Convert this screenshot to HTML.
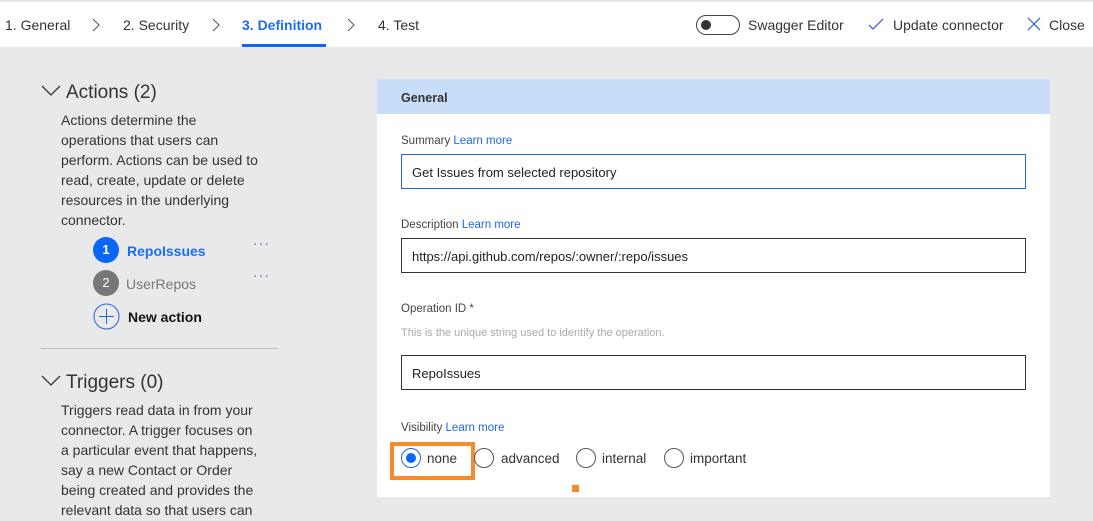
<!DOCTYPE html>
<html><head><meta charset="utf-8"><style>
*{margin:0;padding:0;box-sizing:border-box}
body{width:1093px;height:521px;overflow:hidden;background:#e9e9e9;font-family:"Liberation Sans",sans-serif;color:#222;position:relative}
.a{position:absolute;white-space:nowrap}
#hdr{position:absolute;left:0;top:0;width:1093px;height:47px;background:#fff;border-top:2px solid #e6e6e6}
.t{font-size:14px;color:#333;top:15px}
.d{font-size:14px;line-height:20px;color:#333}
.lbl{font-size:11.5px;color:#444}
.lbl span{color:#2266e0}
.inp{position:absolute;left:401px;width:625px;height:35px;border:1px solid #333;background:#fff;font-size:13px;padding:10px 10px;color:#222}
.rad{position:absolute;width:20px;height:20px;border:1px solid #555;border-radius:50%;background:#fff}
</style></head><body>
<div id="hdr">
<div class="a t" style="left:5px">1. General</div>
<svg class="a" style="left:92px;top:16px" width="8" height="14"><path d="M1 1l6 6-6 6" fill="none" stroke="#666" stroke-width="1.2"/></svg>
<div class="a t" style="left:123px">2. Security</div>
<svg class="a" style="left:212px;top:16px" width="8" height="14"><path d="M1 1l6 6-6 6" fill="none" stroke="#666" stroke-width="1.2"/></svg>
<div class="a t" style="left:242px;color:#1a6ef5;font-weight:bold">3. Definition</div>
<div class="a" style="left:242px;top:42px;width:84px;height:3px;background:#0a66f5"></div>
<svg class="a" style="left:347px;top:16px" width="8" height="14"><path d="M1 1l6 6-6 6" fill="none" stroke="#666" stroke-width="1.2"/></svg>
<div class="a t" style="left:378px">4. Test</div>
<div class="a" style="left:696px;top:13px;width:44px;height:20px;border:1px solid #444;border-radius:10px"></div>
<div class="a" style="left:701px;top:18px;width:10px;height:10px;border-radius:50%;background:#333"></div>
<div class="a t" style="left:748px">Swagger Editor</div>
<svg class="a" style="left:868px;top:16px" width="16" height="13"><path d="M1 7l4 4 10-10" fill="none" stroke="#4a6fd0" stroke-width="1.3"/></svg>
<div class="a t" style="left:893px">Update connector</div>
<svg class="a" style="left:1027px;top:15px" width="14" height="14"><path d="M1 1l12 12M13 1L1 13" fill="none" stroke="#4a6fd0" stroke-width="1.3"/></svg>
<div class="a t" style="left:1049px">Close</div>
</div>

<svg class="a" style="left:41px;top:85px" width="20" height="12"><path d="M1 1l9 9 9-9" fill="none" stroke="#333" stroke-width="1.3"/></svg>
<div class="a" style="left:66px;top:82px;font-size:19px;color:#333">Actions (2)</div>
<div class="a d" style="left:61px;top:110px">Actions determine the</div>
<div class="a d" style="left:61px;top:130px">operations that users can</div>
<div class="a d" style="left:61px;top:150px">perform. Actions can be used to</div>
<div class="a d" style="left:61px;top:170px">read, create, update or delete</div>
<div class="a d" style="left:61px;top:190px">resources in the underlying</div>
<div class="a d" style="left:61px;top:210px">connector.</div>

<div class="a" style="left:93px;top:237px;width:26px;height:26px;border-radius:50%;background:#0a66f5;color:#fff;font-size:13px;font-weight:bold;text-align:center;line-height:26px">1</div>
<div class="a" style="left:127px;top:243px;font-size:14px;font-weight:bold;color:#1a6ef5">RepoIssues</div>
<div class="a" style="left:253px;top:235px;font-size:14px;color:#4a6fd0;letter-spacing:1px">···</div>
<div class="a" style="left:93px;top:270px;width:26px;height:26px;border-radius:50%;background:#777;color:#fff;font-size:13px;text-align:center;line-height:26px">2</div>
<div class="a" style="left:126px;top:276px;font-size:14px;color:#777">UserRepos</div>
<div class="a" style="left:253px;top:267px;font-size:14px;color:#4a6fd0;letter-spacing:1px">···</div>
<svg class="a" style="left:93px;top:303px" width="27" height="27"><circle cx="13.5" cy="13.5" r="12.5" fill="none" stroke="#2266e0" stroke-width="1"/><path d="M13.5 6v15M6 13.5h15" stroke="#2266e0" stroke-width="1"/></svg>
<div class="a" style="left:128px;top:309px;font-size:14px;font-weight:bold;color:#111">New action</div>
<div class="a" style="left:41px;top:348px;width:237px;height:1px;background:#bbb"></div>

<svg class="a" style="left:41px;top:375px" width="20" height="12"><path d="M1 1l9 9 9-9" fill="none" stroke="#333" stroke-width="1.3"/></svg>
<div class="a" style="left:66px;top:372px;font-size:19px;color:#333">Triggers (0)</div>
<div class="a d" style="left:61px;top:400px">Triggers read data in from your</div>
<div class="a d" style="left:61px;top:420px">connector. A trigger focuses on</div>
<div class="a d" style="left:61px;top:440px">a particular event that happens,</div>
<div class="a d" style="left:61px;top:460px">say a new Contact or Order</div>
<div class="a d" style="left:61px;top:480px">being created and provides the</div>
<div class="a d" style="left:61px;top:500px">relevant data so that users can</div>

<div class="a" style="left:377px;top:79px;width:673px;height:418px;background:#fff"></div>
<div class="a" style="left:377px;top:79px;width:673px;height:35px;background:#c8ddf8"></div>
<div class="a" style="left:401px;top:91px;font-size:12.5px;font-weight:bold;color:#333">General</div>

<div class="a lbl" style="left:401px;top:135px">Summary <span>Learn more</span></div>
<div class="inp" style="top:154px;border-color:#2266e0">Get Issues from selected repository</div>
<div class="a lbl" style="left:401px;top:219px">Description <span>Learn more</span></div>
<div class="inp" style="top:238px">https://api.github.com/repos/:owner/:repo/issues</div>
<div class="a lbl" style="left:401px;top:303px">Operation ID *</div>
<div class="a lbl" style="left:401px;top:327px;color:#aaa;font-size:11px">This is the unique string used to identify the operation.</div>
<div class="inp" style="top:355px">RepoIssues</div>
<div class="a lbl" style="left:401px;top:422px">Visibility <span>Learn more</span></div>

<div class="a" style="left:390px;top:442px;width:85px;height:38px;border:4px solid #f68a2d"></div>
<div class="rad" style="left:401px;top:448px;border-color:#2266e0"></div>
<div class="a" style="left:406px;top:453px;width:10px;height:10px;border-radius:50%;background:#0a66f5"></div>
<div class="a" style="left:427px;top:451px;font-size:13.5px;color:#333">none</div>
<div class="rad" style="left:474px;top:448px"></div>
<div class="a" style="left:501px;top:451px;font-size:13.5px;color:#333">advanced</div>
<div class="rad" style="left:576px;top:448px"></div>
<div class="a" style="left:602px;top:451px;font-size:13.5px;color:#333">internal</div>
<div class="rad" style="left:664px;top:448px"></div>
<div class="a" style="left:690px;top:451px;font-size:13.5px;color:#333">important</div>
<div class="a" style="left:572px;top:485px;width:7px;height:7px;background:#f68a2d"></div>
</body></html>
